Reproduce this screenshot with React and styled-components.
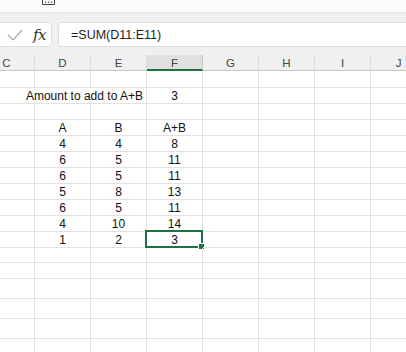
import React from 'react';
import styled, { createGlobalStyle } from 'styled-components';

const GlobalStyle = createGlobalStyle`
  html, body {
    margin: 0;
    padding: 0;
    background: #ffffff;
    overflow: hidden;
  }
  body {
    font-family: "Liberation Sans", Arial, sans-serif;
  }
`;

const Window = styled.div`
  width: 406px;
  height: 352px;
  overflow: hidden;
  background: #ffffff;
`;

const TopBar = styled.div`
  height: 13px;
  background: #fbfbfb;
  border-bottom: 1px solid #e6e6e6;
  display: flex;
  align-items: flex-start;
  padding-left: 42px;
  box-sizing: border-box;
`;

const FormulaArea = styled.div`
  background: #f0f0f0;
  padding: 9px 0 8px;
  display: flex;
  gap: 6px;
  margin-left: -8px;
`;

const NameTools = styled.div`
  width: 60px;
  height: 25px;
  box-sizing: border-box;
  background: #ffffff;
  border: 1px solid #dedede;
  border-radius: 4px;
  display: flex;
  align-items: center;
  justify-content: flex-end;
  gap: 10px;
  padding-right: 5px;
`;

const Fx = styled.span`
  font-family: "DejaVu Serif", "Liberation Serif", serif;
  font-style: italic;
  font-size: 15px;
  color: #333;
  letter-spacing: -0.5px;
`;

const FormulaBox = styled.div`
  flex: 1;
  height: 25px;
  box-sizing: border-box;
  background: #ffffff;
  border: 1px solid #dedede;
  border-right: none;
  border-radius: 4px 0 0 4px;
  display: flex;
  align-items: center;
  padding-left: 12px;
  font-size: 12.5px;
  color: #1e1e1e;
`;

const Sheet = styled.div`
  display: grid;
  grid-template-columns: repeat(8, 56px);
  margin-left: -21px;
  width: 448px;
`;

const HeadCell = styled.div`
  height: 16px;
  box-sizing: border-box;
  background: ${p => (p.$active ? '#e0e0e0' : '#f0f0f0')};
  border-right: 1px solid ${p => (p.$active ? '#c8c8c8' : '#dadada')};
  border-bottom: ${p => (p.$active ? '2px solid #1e7145' : '1px solid #c6c6c6')};
  margin-top: 0;
  display: flex;
  align-items: center;
  justify-content: center;
  font-size: 11.5px;
  color: #444;
  padding-top: ${p => (p.$active ? '1px' : '0')};
`;

const HeadSpacer = styled.div`
  grid-column: 1 / -1;
  height: 0;
`;

const Cell = styled.div`
  position: relative;
  height: ${p => p.$h}px;
  box-sizing: border-box;
  border-right: 1px solid #e1e1e1;
  border-bottom: 1px solid #e1e1e1;
  display: flex;
  align-items: center;
  justify-content: ${p => (p.$right ? 'flex-end' : 'center')};
  padding-right: ${p => (p.$right ? '3px' : '0')};
  grid-column: ${p => p.$span || 'auto'};
  font-size: 12px;
  color: #111;
  white-space: nowrap;
`;

const Selection = styled.div`
  position: absolute;
  left: -2px;
  top: -2px;
  right: -1px;
  bottom: -1px;
  border: 2px solid #1e7145;
  pointer-events: none;

  &::after {
    content: '';
    position: absolute;
    right: -4px;
    bottom: -4px;
    width: 5px;
    height: 5px;
    background: #1e7145;
    border: 1px solid #ffffff;
  }
`;

const CheckIcon = () => (
  <svg width="16" height="12" viewBox="0 0 16 12">
    <path d="M1 6 L6 11 L15 1" fill="none" stroke="#a9a9a9" strokeWidth="1.2" />
  </svg>
);

const TableIcon = () => (
  <svg width="13" height="5" viewBox="0 0 13 5">
    <path d="M0.5 0 V4.5 H12.5 V0" fill="none" stroke="#444" strokeWidth="1" />
    <rect x="3" y="1.5" width="1.2" height="1.2" fill="#444" />
    <rect x="6" y="1.5" width="1.2" height="1.2" fill="#444" />
    <rect x="9" y="1.5" width="1.2" height="1.2" fill="#444" />
  </svg>
);

const columns = ['C', 'D', 'E', 'F', 'G', 'H', 'I', 'J'];

// values sit in D, E, F (index 1..3)
const rows = [
  { h: 17 },
  { h: 16, label: 'Amount to add to A+B', f: '3' },
  { h: 16 },
  { h: 16, d: 'A', e: 'B', f: 'A+B' },
  { h: 16, d: '4', e: '4', f: '8' },
  { h: 16, d: '6', e: '5', f: '11' },
  { h: 16, d: '6', e: '5', f: '11' },
  { h: 16, d: '5', e: '8', f: '13' },
  { h: 16, d: '6', e: '5', f: '11' },
  { h: 16, d: '4', e: '10', f: '14' },
  { h: 16, d: '1', e: '2', f: '3', selected: true },
  { h: 15 },
  { h: 16 },
  { h: 20 },
  { h: 20 },
  { h: 20 },
  { h: 20 },
];

const renderRow = (row, i) => {
  if (row.label) {
    return (
      <React.Fragment key={i}>
        <Cell $h={row.h} $span="1 / 4" $right>{row.label}</Cell>
        <Cell $h={row.h}>{row.f}</Cell>
        {[4, 5, 6, 7].map(c => <Cell key={c} $h={row.h} />)}
      </React.Fragment>
    );
  }
  const vals = [null, row.d, row.e, row.f, null, null, null, null];
  return (
    <React.Fragment key={i}>
      {vals.map((v, c) => (
        <Cell key={c} $h={row.h}>
          {v}
          {row.selected && c === 3 && <Selection />}
        </Cell>
      ))}
    </React.Fragment>
  );
};

export default function App() {
  return (
    <Window>
      <GlobalStyle />
      <TopBar>
        <TableIcon />
      </TopBar>
      <FormulaArea>
        <NameTools>
          <CheckIcon />
          <Fx>fx</Fx>
        </NameTools>
        <FormulaBox>=SUM(D11:E11)</FormulaBox>
      </FormulaArea>
      <Sheet>
        {columns.map(c => (
          <HeadCell key={c} $active={c === 'F'}>{c}</HeadCell>
        ))}
        <HeadSpacer />
        {rows.map(renderRow)}
      </Sheet>
    </Window>
  );
}
